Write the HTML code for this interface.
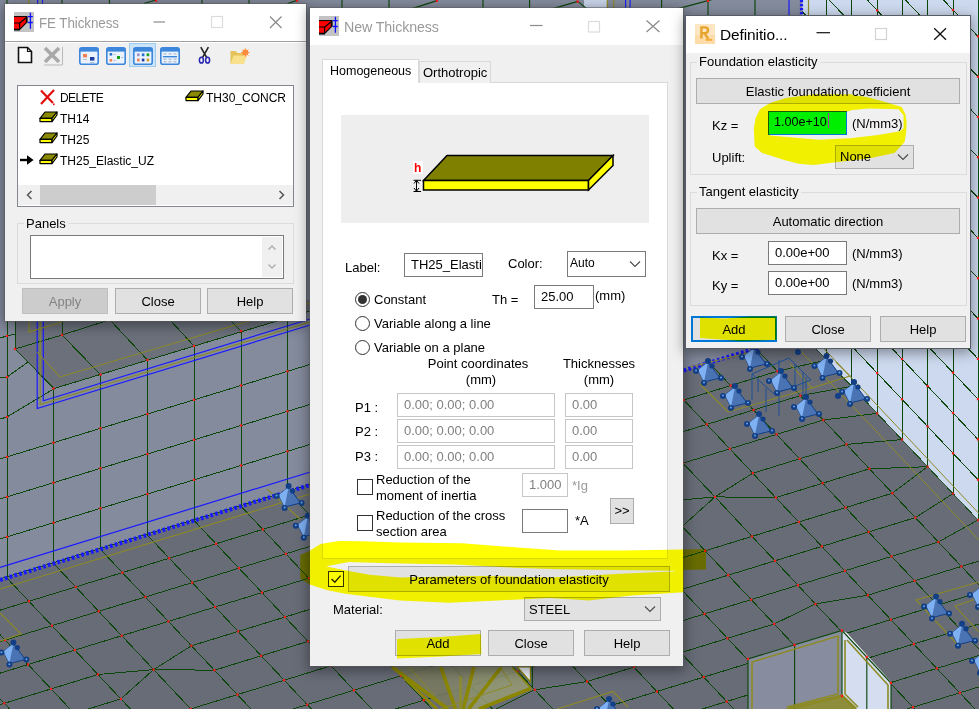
<!DOCTYPE html>
<html>
<head>
<meta charset="utf-8">
<title>New Thickness</title>
<style>
html,body{margin:0;padding:0;}
body{width:979px;height:709px;overflow:hidden;position:relative;background:#6a6e78;font-family:"Liberation Sans",sans-serif;font-size:13px;color:#000;}
.abs{position:absolute;}
#bg{position:absolute;left:0;top:0;width:979px;height:709px;}
.dlg{position:absolute;background:#f0f0f0;box-shadow:0 0 0 1px rgba(90,90,90,.55),0 3px 12px 2px rgba(0,0,0,.38);}
.tbar{position:absolute;left:0;top:0;right:0;background:#fff;}
.ttl{position:absolute;font-size:15px;color:#9a9a9a;white-space:nowrap;letter-spacing:-0.1px;}
.t{position:absolute;white-space:nowrap;line-height:16px;font-size:13px;}
.btn{position:absolute;box-sizing:border-box;background:#e1e1e1;border:1px solid #adadad;text-align:center;font-size:13px;line-height:22px;white-space:nowrap;}
.inp{position:absolute;box-sizing:border-box;background:#fff;border:1px solid #7a7a7a;font-size:13px;line-height:22px;white-space:nowrap;overflow:hidden;padding-left:5px;}
.inp.dis{border-color:#c6c6c6;color:#808080;}
.cmb{position:absolute;box-sizing:border-box;background:#fff;border:1px solid #7a7a7a;font-size:13px;line-height:22px;white-space:nowrap;overflow:hidden;padding-left:4px;}
.grp{position:absolute;box-sizing:border-box;border:1px solid #dcdcdc;}
.glab{position:absolute;background:#f0f0f0;padding:0 2px;white-space:nowrap;line-height:16px;font-size:13px;}
.radio{position:absolute;box-sizing:border-box;width:15px;height:15px;border:1px solid #333;border-radius:50%;background:#fff;}
.radio.on:after{content:"";position:absolute;left:2px;top:2px;width:9px;height:9px;border-radius:50%;background:#333;}
.chk{position:absolute;box-sizing:border-box;width:15px;height:15px;border:1px solid #333;background:#fff;}
svg{position:absolute;overflow:visible;}
</style>
</head>
<body>
<!-- BACKGROUND -->
<svg id="bg" width="979" height="709" viewBox="0 0 979 709">
<!--BGSTART-->
<rect x="0" y="0" width="979" height="709" fill="#686c77"/>
<polygon points="0,0 802.3,0 802.3,334.1 0,580" fill="#848b9d"/>
<polygon points="802.3,0 979,0 979,521.1 802.3,334.1" fill="#cdd9ee"/>
<polygon points="15,300 15,349 54,388.5 310,311 310,300" fill="#6b707b"/>
<defs><clipPath id="cf"><polygon points="0,580 802.3,334.1 979,521.1 979,709 0,709"/></clipPath>
<clipPath id="cw"><polygon points="0,0 802.3,0 802.3,334.1 0,580"/></clipPath>
<clipPath id="cl"><polygon points="802.3,0 979,0 979,521.1 802.3,334.1"/></clipPath></defs>
<g clip-path="url(#cf)" stroke="#0c470c" stroke-width="1" fill="none" shape-rendering="crispEdges">
<path d="M-60.8,314.2L-37.8,338.6M-14.0,299.8L9.0,324.2M32.8,285.4L55.8,309.8M-84.6,353.0L-37.8,338.6M-37.8,338.6L9.0,324.2M-37.8,338.6L-14.8,363.0M9.0,324.2L55.8,309.8M9.0,324.2L32.0,348.6M55.8,309.8L102.6,295.4M55.8,309.8L78.8,334.2M102.6,295.4L125.6,319.8M149.3,281.1L172.3,305.5M-61.6,377.4L-14.8,363.0M-61.6,377.4L-38.6,401.8M-14.8,363.0L32.0,348.6M-14.8,363.0L8.2,387.4M32.0,348.6L78.8,334.2M32.0,348.6L55.0,373.0M78.8,334.2L125.6,319.8M78.8,334.2L101.8,358.6M125.6,319.8L172.3,305.5M125.6,319.8L148.6,344.2M172.3,305.5L219.1,291.1M172.3,305.5L195.3,329.9M219.1,291.1L242.1,315.5M265.9,276.7L288.9,301.1M-85.3,416.1L-38.6,401.8M-38.6,401.8L8.2,387.4M-38.6,401.8L-15.6,426.2M8.2,387.4L55.0,373.0M8.2,387.4L31.2,411.8M55.0,373.0L101.8,358.6M55.0,373.0L78.0,397.4M101.8,358.6L148.6,344.2M101.8,358.6L124.8,383.0M148.6,344.2L195.3,329.9M148.6,344.2L171.6,368.6M195.3,329.9L242.1,315.5M195.3,329.9L218.3,354.3M242.1,315.5L288.9,301.1M242.1,315.5L265.1,339.9M288.9,301.1L335.7,286.7M288.9,301.1L311.9,325.5M335.7,286.7L358.7,311.1M-62.3,440.5L-15.6,426.2M-62.3,440.5L-39.3,464.9M-15.6,426.2L31.2,411.8M-15.6,426.2L7.4,450.6M31.2,411.8L78.0,397.4M31.2,411.8L54.2,436.2M78.0,397.4L124.8,383.0M78.0,397.4L101.0,421.8M124.8,383.0L171.6,368.6M124.8,383.0L147.8,407.4M171.6,368.6L218.3,354.3M171.6,368.6L194.6,393.0M218.3,354.3L265.1,339.9M218.3,354.3L241.3,378.7M265.1,339.9L311.9,325.5M265.1,339.9L288.1,364.3M311.9,325.5L358.7,311.1M311.9,325.5L334.9,349.9M358.7,311.1L405.5,296.7M358.7,311.1L381.7,335.5M405.5,296.7L428.5,321.1M452.2,282.4L475.2,306.8M-86.1,479.3L-39.3,464.9M-39.3,464.9L7.4,450.6M-39.3,464.9L-16.3,489.3M7.4,450.6L54.2,436.2M7.4,450.6L30.4,475.0M54.2,436.2L101.0,421.8M54.2,436.2L77.2,460.6M101.0,421.8L147.8,407.4M101.0,421.8L124.0,446.2M147.8,407.4L194.6,393.0M147.8,407.4L170.8,431.8M194.6,393.0L241.3,378.7M194.6,393.0L217.6,417.4M241.3,378.7L288.1,364.3M241.3,378.7L264.3,403.1M288.1,364.3L334.9,349.9M288.1,364.3L311.1,388.7M334.9,349.9L381.7,335.5M334.9,349.9L357.9,374.3M381.7,335.5L428.5,321.1M381.7,335.5L404.7,359.9M428.5,321.1L475.2,306.8M428.5,321.1L451.5,345.5M475.2,306.8L522.0,292.4M475.2,306.8L498.2,331.2M522.0,292.4L545.0,316.8M568.8,278.0L591.8,302.4M-63.1,503.7L-16.3,489.3M-63.1,503.7L-40.1,528.1M-16.3,489.3L30.4,475.0M-16.3,489.3L6.7,513.7M30.4,475.0L77.2,460.6M30.4,475.0L53.4,499.4M77.2,460.6L124.0,446.2M77.2,460.6L100.2,485.0M124.0,446.2L170.8,431.8M124.0,446.2L147.0,470.6M170.8,431.8L217.6,417.4M170.8,431.8L193.8,456.2M217.6,417.4L264.3,403.1M217.6,417.4L240.6,441.8M264.3,403.1L311.1,388.7M264.3,403.1L287.3,427.5M311.1,388.7L357.9,374.3M311.1,388.7L334.1,413.1M357.9,374.3L404.7,359.9M357.9,374.3L380.9,398.7M404.7,359.9L451.5,345.5M404.7,359.9L427.7,384.3M451.5,345.5L498.2,331.2M451.5,345.5L474.5,369.9M498.2,331.2L545.0,316.8M498.2,331.2L521.2,355.6M545.0,316.8L591.8,302.4M545.0,316.8L568.0,341.2M591.8,302.4L638.6,288.0M591.8,302.4L614.8,326.8M638.6,288.0L661.6,312.4M-86.9,542.5L-40.1,528.1M-40.1,528.1L6.7,513.7M-40.1,528.1L-17.1,552.5M6.7,513.7L53.4,499.4M6.7,513.7L29.7,538.1M53.4,499.4L100.2,485.0M53.4,499.4L76.4,523.8M100.2,485.0L147.0,470.6M100.2,485.0L123.2,509.4M147.0,470.6L193.8,456.2M147.0,470.6L170.0,495.0M193.8,456.2L240.6,441.8M193.8,456.2L216.8,480.6M240.6,441.8L287.3,427.5M240.6,441.8L263.6,466.2M287.3,427.5L334.1,413.1M287.3,427.5L310.3,451.9M334.1,413.1L380.9,398.7M334.1,413.1L357.1,437.5M380.9,398.7L427.7,384.3M380.9,398.7L403.9,423.1M427.7,384.3L474.5,369.9M427.7,384.3L450.7,408.7M474.5,369.9L521.2,355.6M474.5,369.9L497.5,394.3M521.2,355.6L568.0,341.2M521.2,355.6L544.2,380.0M568.0,341.2L614.8,326.8M568.0,341.2L591.0,365.6M614.8,326.8L661.6,312.4M614.8,326.8L637.8,351.2M661.6,312.4L708.4,298.0M661.6,312.4L684.6,336.8M708.4,298.0L731.4,322.4M755.1,283.7L778.1,308.1M-63.9,566.9L-17.1,552.5M-63.9,566.9L-40.9,591.3M-17.1,552.5L29.7,538.1M-17.1,552.5L5.9,576.9M29.7,538.1L76.4,523.8M29.7,538.1L52.7,562.5M76.4,523.8L123.2,509.4M76.4,523.8L99.4,548.2M123.2,509.4L170.0,495.0M123.2,509.4L146.2,533.8M170.0,495.0L216.8,480.6M170.0,495.0L193.0,519.4M216.8,480.6L263.6,466.2M216.8,480.6L239.8,505.0M263.6,466.2L310.3,451.9M263.6,466.2L286.6,490.6M310.3,451.9L357.1,437.5M310.3,451.9L333.3,476.3M357.1,437.5L403.9,423.1M357.1,437.5L380.1,461.9M403.9,423.1L450.7,408.7M403.9,423.1L426.9,447.5M450.7,408.7L497.5,394.3M450.7,408.7L473.7,433.1M497.5,394.3L544.2,380.0M497.5,394.3L520.5,418.7M544.2,380.0L591.0,365.6M544.2,380.0L567.2,404.4M591.0,365.6L637.8,351.2M591.0,365.6L614.0,390.0M637.8,351.2L684.6,336.8M637.8,351.2L660.8,375.6M684.6,336.8L731.4,322.4M684.6,336.8L707.6,361.2M731.4,322.4L778.1,308.1M731.4,322.4L754.4,346.8M778.1,308.1L824.9,293.7M778.1,308.1L801.1,332.5M824.9,293.7L847.9,318.1M871.7,279.3L894.7,303.7M-87.7,605.7L-40.9,591.3M-40.9,591.3L5.9,576.9M-40.9,591.3L-17.9,615.7M5.9,576.9L52.7,562.5M5.9,576.9L28.9,601.3M52.7,562.5L99.4,548.2M52.7,562.5L75.7,586.9M99.4,548.2L146.2,533.8M99.4,548.2L122.4,572.6M146.2,533.8L193.0,519.4M146.2,533.8L169.2,558.2M193.0,519.4L239.8,505.0M193.0,519.4L216.0,543.8M239.8,505.0L286.6,490.6M239.8,505.0L262.8,529.4M286.6,490.6L333.3,476.3M286.6,490.6L309.6,515.0M333.3,476.3L380.1,461.9M333.3,476.3L356.3,500.7M380.1,461.9L426.9,447.5M380.1,461.9L403.1,486.3M426.9,447.5L473.7,433.1M426.9,447.5L449.9,471.9M473.7,433.1L520.5,418.7M473.7,433.1L496.7,457.5M520.5,418.7L567.2,404.4M520.5,418.7L543.5,443.1M567.2,404.4L614.0,390.0M567.2,404.4L590.2,428.8M614.0,390.0L660.8,375.6M614.0,390.0L637.0,414.4M660.8,375.6L707.6,361.2M660.8,375.6L683.8,400.0M707.6,361.2L754.4,346.8M707.6,361.2L730.6,385.6M754.4,346.8L801.1,332.5M754.4,346.8L777.4,371.2M801.1,332.5L847.9,318.1M801.1,332.5L826.5,360.0M847.9,318.1L894.7,303.7M847.9,318.1L870.9,342.5M894.7,303.7L941.5,289.3M894.7,303.7L917.7,328.1M941.5,289.3L964.5,313.7M-64.7,630.1L-17.9,615.7M-64.7,630.1L-41.7,654.5M-17.9,615.7L28.9,601.3M-17.9,615.7L5.1,640.1M28.9,601.3L75.7,586.9M28.9,601.3L51.9,625.7M75.7,586.9L122.4,572.6M75.7,586.9L98.7,611.3M122.4,572.6L169.2,558.2M122.4,572.6L145.4,597.0M169.2,558.2L216.0,543.8M169.2,558.2L192.2,582.6M216.0,543.8L262.8,529.4M216.0,543.8L239.0,568.2M262.8,529.4L309.6,515.0M262.8,529.4L285.8,553.8M309.6,515.0L356.3,500.7M309.6,515.0L332.6,539.4M356.3,500.7L403.1,486.3M356.3,500.7L379.3,525.1M403.1,486.3L449.9,471.9M403.1,486.3L426.1,510.7M449.9,471.9L496.7,457.5M449.9,471.9L472.9,496.3M496.7,457.5L543.5,443.1M496.7,457.5L519.7,481.9M543.5,443.1L590.2,428.8M543.5,443.1L566.5,467.5M590.2,428.8L637.0,414.4M590.2,428.8L613.2,453.2M637.0,414.4L683.8,400.0M637.0,414.4L660.0,438.8M683.8,400.0L730.6,385.6M683.8,400.0L706.8,424.4M730.6,385.6L777.4,371.2M730.6,385.6L753.6,410.0M777.4,371.2L826.5,360.0M777.4,371.2L800.4,395.6M826.5,360.0L870.9,342.5M826.5,360.0L851.5,386.3M870.9,342.5L917.7,328.1M870.9,342.5L893.9,366.9M917.7,328.1L964.5,313.7M917.7,328.1L940.7,352.5M964.5,313.7L1011.3,299.3M964.5,313.7L987.5,338.1M1011.3,299.3L1034.3,323.7M-88.5,668.9L-41.7,654.5M-41.7,654.5L5.1,640.1M-41.7,654.5L-18.7,678.9M5.1,640.1L51.9,625.7M5.1,640.1L28.1,664.5M51.9,625.7L98.7,611.3M51.9,625.7L74.9,650.1M98.7,611.3L145.4,597.0M98.7,611.3L121.7,635.7M145.4,597.0L192.2,582.6M145.4,597.0L168.4,621.4M192.2,582.6L239.0,568.2M192.2,582.6L215.2,607.0M239.0,568.2L285.8,553.8M239.0,568.2L262.0,592.6M285.8,553.8L332.6,539.4M285.8,553.8L308.8,578.2M332.6,539.4L379.3,525.1M332.6,539.4L355.6,563.8M379.3,525.1L426.1,510.7M379.3,525.1L402.3,549.5M426.1,510.7L472.9,496.3M426.1,510.7L449.1,535.1M472.9,496.3L519.7,481.9M472.9,496.3L495.9,520.7M519.7,481.9L566.5,467.5M519.7,481.9L542.7,506.3M566.5,467.5L613.2,453.2M566.5,467.5L589.5,491.9M613.2,453.2L660.0,438.8M613.2,453.2L636.2,477.6M660.0,438.8L706.8,424.4M660.0,438.8L683.0,463.2M706.8,424.4L753.6,410.0M706.8,424.4L729.8,448.8M753.6,410.0L800.4,395.6M753.6,410.0L776.6,434.4M800.4,395.6L851.5,386.3M800.4,395.6L823.4,420.0M851.5,386.3L893.9,366.9M851.5,386.3L877.2,413.4M893.9,366.9L940.7,352.5M893.9,366.9L916.9,391.3M940.7,352.5L987.5,338.1M940.7,352.5L963.7,376.9M987.5,338.1L1034.3,323.7M987.5,338.1L1010.5,362.5M1034.3,323.7L1081.0,309.4M1034.3,323.7L1057.3,348.1M-65.5,693.3L-18.7,678.9M-65.5,693.3L-42.5,717.7M-18.7,678.9L28.1,664.5M-18.7,678.9L4.3,703.3M28.1,664.5L74.9,650.1M28.1,664.5L51.1,688.9M74.9,650.1L121.7,635.7M74.9,650.1L97.9,674.5M121.7,635.7L168.4,621.4M121.7,635.7L153.6,669.6M168.4,621.4L215.2,607.0M168.4,621.4L191.4,645.8M215.2,607.0L262.0,592.6M215.2,607.0L238.2,631.4M262.0,592.6L308.8,578.2M262.0,592.6L285.0,617.0M308.8,578.2L355.6,563.8M308.8,578.2L331.8,602.6M355.6,563.8L402.3,549.5M355.6,563.8L378.6,588.2M402.3,549.5L449.1,535.1M402.3,549.5L425.3,573.9M449.1,535.1L495.9,520.7M449.1,535.1L472.1,559.5M495.9,520.7L542.7,506.3M495.9,520.7L518.9,545.1M542.7,506.3L589.5,491.9M542.7,506.3L565.7,530.7M589.5,491.9L636.2,477.6M589.5,491.9L612.5,516.3M636.2,477.6L683.0,463.2M636.2,477.6L659.2,502.0M683.0,463.2L729.8,448.8M683.0,463.2L715.0,496.9M729.8,448.8L776.6,434.4M729.8,448.8L752.8,473.2M776.6,434.4L823.4,420.0M776.6,434.4L799.6,458.8M823.4,420.0L877.2,413.4M823.4,420.0L846.4,444.4M877.2,413.4L916.9,391.3M877.2,413.4L902.0,439.6M916.9,391.3L963.7,376.9M916.9,391.3L939.9,415.7M963.7,376.9L1010.5,362.5M963.7,376.9L986.7,401.3M1010.5,362.5L1057.3,348.1M1010.5,362.5L1033.5,386.9M-89.2,732.0L-42.5,717.7M-42.5,717.7L4.3,703.3M-42.5,717.7L-19.5,742.1M4.3,703.3L51.1,688.9M4.3,703.3L27.3,727.7M51.1,688.9L97.9,674.5M51.1,688.9L74.1,713.3M97.9,674.5L153.6,669.6M97.9,674.5L120.9,698.9M153.6,669.6L191.4,645.8M191.4,645.8L238.2,631.4M191.4,645.8L214.4,670.2M238.2,631.4L285.0,617.0M238.2,631.4L261.2,655.8M285.0,617.0L331.8,602.6M285.0,617.0L308.0,641.4M331.8,602.6L378.6,588.2M331.8,602.6L354.8,627.0M378.6,588.2L425.3,573.9M378.6,588.2L401.6,612.6M425.3,573.9L472.1,559.5M425.3,573.9L448.3,598.3M472.1,559.5L518.9,545.1M472.1,559.5L495.1,583.9M518.9,545.1L565.7,530.7M518.9,545.1L541.9,569.5M565.7,530.7L612.5,516.3M565.7,530.7L588.7,555.1M612.5,516.3L659.2,502.0M612.5,516.3L635.5,540.7M659.2,502.0L715.0,496.9M659.2,502.0L682.2,526.4M715.0,496.9L752.8,473.2M752.8,473.2L799.6,458.8M752.8,473.2L775.8,497.6M799.6,458.8L846.4,444.4M799.6,458.8L822.6,483.2M846.4,444.4L902.0,439.6M846.4,444.4L869.4,468.8M902.0,439.6L939.9,415.7M902.0,439.6L927.6,466.7M939.9,415.7L986.7,401.3M939.9,415.7L962.9,440.1M986.7,401.3L1033.5,386.9M986.7,401.3L1009.7,425.7M1033.5,386.9L1080.3,372.5M1033.5,386.9L1056.5,411.3M-66.2,756.4L-19.5,742.1M-19.5,742.1L27.3,727.7M-19.5,742.1L3.5,766.5M27.3,727.7L74.1,713.3M27.3,727.7L50.3,752.1M74.1,713.3L120.9,698.9M74.1,713.3L97.1,737.7M120.9,698.9L153.6,669.6M120.9,698.9L143.9,723.3M153.6,669.6L214.4,670.2M153.6,669.6L190.7,708.9M214.4,670.2L261.2,655.8M214.4,670.2L237.4,694.6M261.2,655.8L308.0,641.4M261.2,655.8L284.2,680.2M308.0,641.4L354.8,627.0M308.0,641.4L331.0,665.8M354.8,627.0L401.6,612.6M354.8,627.0L377.8,651.4M401.6,612.6L448.3,598.3M401.6,612.6L424.6,637.0M448.3,598.3L495.1,583.9M448.3,598.3L471.3,622.7M495.1,583.9L541.9,569.5M495.1,583.9L518.1,608.3M541.9,569.5L588.7,555.1M541.9,569.5L564.9,593.9M588.7,555.1L635.5,540.7M588.7,555.1L611.7,579.5M635.5,540.7L682.2,526.4M635.5,540.7L658.5,565.1M682.2,526.4L715.0,496.9M682.2,526.4L705.2,550.8M715.0,496.9L775.8,497.6M715.0,496.9L752.0,536.4M775.8,497.6L822.6,483.2M775.8,497.6L798.8,522.0M822.6,483.2L869.4,468.8M822.6,483.2L845.6,507.6M869.4,468.8L927.6,466.7M869.4,468.8L892.4,493.2M927.6,466.7L962.9,440.1M962.9,440.1L1009.7,425.7M962.9,440.1L985.9,464.5M1009.7,425.7L1056.5,411.3M1009.7,425.7L1032.7,450.1M-43.2,780.8L3.5,766.5M3.5,766.5L50.3,752.1M3.5,766.5L26.5,790.9M50.3,752.1L97.1,737.7M50.3,752.1L73.3,776.5M97.1,737.7L143.9,723.3M97.1,737.7L120.1,762.1M143.9,723.3L190.7,708.9M143.9,723.3L166.9,747.7M190.7,708.9L237.4,694.6M190.7,708.9L213.7,733.3M237.4,694.6L284.2,680.2M237.4,694.6L260.4,719.0M284.2,680.2L331.0,665.8M284.2,680.2L307.2,704.6M331.0,665.8L377.8,651.4M331.0,665.8L354.0,690.2M377.8,651.4L424.6,637.0M377.8,651.4L400.8,675.8M424.6,637.0L471.3,622.7M424.6,637.0L447.6,661.4M471.3,622.7L518.1,608.3M471.3,622.7L494.3,647.1M518.1,608.3L564.9,593.9M518.1,608.3L541.1,632.7M564.9,593.9L611.7,579.5M564.9,593.9L587.9,618.3M611.7,579.5L658.5,565.1M611.7,579.5L634.7,603.9M658.5,565.1L705.2,550.8M658.5,565.1L681.5,589.5M705.2,550.8L752.0,536.4M705.2,550.8L728.2,575.2M752.0,536.4L798.8,522.0M752.0,536.4L775.0,560.8M798.8,522.0L845.6,507.6M798.8,522.0L821.8,546.4M845.6,507.6L892.4,493.2M845.6,507.6L868.6,532.0M892.4,493.2L927.6,466.7M892.4,493.2L915.4,517.6M927.6,466.7L985.9,464.5M927.6,466.7L953.0,493.6M985.9,464.5L1032.7,450.1M985.9,464.5L1008.9,488.9M1032.7,450.1L1079.5,435.7M1032.7,450.1L1055.7,474.5M73.3,776.5L120.1,762.1M120.1,762.1L166.9,747.7M120.1,762.1L143.1,786.5M166.9,747.7L213.7,733.3M166.9,747.7L189.9,772.1M213.7,733.3L260.4,719.0M213.7,733.3L236.7,757.7M260.4,719.0L307.2,704.6M260.4,719.0L283.4,743.4M307.2,704.6L354.0,690.2M307.2,704.6L330.2,729.0M354.0,690.2L400.8,675.8M354.0,690.2L377.0,714.6M400.8,675.8L447.6,661.4M400.8,675.8L423.8,700.2M447.6,661.4L494.3,647.1M447.6,661.4L470.6,685.8M494.3,647.1L541.1,632.7M494.3,647.1L517.3,671.5M541.1,632.7L587.9,618.3M541.1,632.7L564.1,657.1M587.9,618.3L634.7,603.9M587.9,618.3L610.9,642.7M634.7,603.9L681.5,589.5M634.7,603.9L657.7,628.3M681.5,589.5L728.2,575.2M681.5,589.5L704.5,613.9M728.2,575.2L775.0,560.8M728.2,575.2L751.2,599.6M775.0,560.8L821.8,546.4M775.0,560.8L798.0,585.2M821.8,546.4L868.6,532.0M821.8,546.4L844.8,570.8M868.6,532.0L915.4,517.6M868.6,532.0L891.6,556.4M915.4,517.6L953.0,493.6M915.4,517.6L938.4,542.0M953.0,493.6L1008.9,488.9M953.0,493.6L978.0,520.0M1008.9,488.9L1055.7,474.5M1008.9,488.9L1031.9,513.3M189.9,772.1L236.7,757.7M236.7,757.7L283.4,743.4M236.7,757.7L259.7,782.1M283.4,743.4L330.2,729.0M283.4,743.4L306.4,767.8M330.2,729.0L377.0,714.6M330.2,729.0L353.2,753.4M377.0,714.6L423.8,700.2M377.0,714.6L400.0,739.0M423.8,700.2L470.6,685.8M423.8,700.2L446.8,724.6M470.6,685.8L517.3,671.5M470.6,685.8L493.6,710.2M517.3,671.5L564.1,657.1M517.3,671.5L534.8,689.8M564.1,657.1L610.9,642.7M564.1,657.1L587.1,681.5M610.9,642.7L657.7,628.3M610.9,642.7L633.9,667.1M657.7,628.3L704.5,613.9M657.7,628.3L680.7,652.7M704.5,613.9L751.2,599.6M704.5,613.9L727.5,638.3M751.2,599.6L798.0,585.2M751.2,599.6L774.2,624.0M798.0,585.2L844.8,570.8M798.0,585.2L815.4,604.0M844.8,570.8L891.6,556.4M844.8,570.8L867.8,595.2M891.6,556.4L938.4,542.0M891.6,556.4L914.6,580.8M938.4,542.0L978.0,520.0M938.4,542.0L961.4,566.4M978.0,520.0L1031.9,513.3M978.0,520.0L1008.1,552.1M1031.9,513.3L1078.7,498.9M1031.9,513.3L1054.9,537.7M259.7,782.1L306.4,767.8M306.4,767.8L353.2,753.4M306.4,767.8L329.4,792.2M353.2,753.4L400.0,739.0M353.2,753.4L376.2,777.8M400.0,739.0L446.8,724.6M400.0,739.0L423.0,763.4M446.8,724.6L493.6,710.2M446.8,724.6L469.8,749.0M493.6,710.2L534.8,689.8M493.6,710.2L516.6,734.6M534.8,689.8L587.1,681.5M534.8,689.8L563.3,720.3M587.1,681.5L633.9,667.1M587.1,681.5L610.1,705.9M633.9,667.1L680.7,652.7M633.9,667.1L656.9,691.5M680.7,652.7L727.5,638.3M680.7,652.7L703.7,677.1M727.5,638.3L774.2,624.0M727.5,638.3L750.5,662.7M774.2,624.0L815.4,604.0M774.2,624.0L797.2,648.4M815.4,604.0L867.8,595.2M815.4,604.0L844.0,634.0M867.8,595.2L914.6,580.8M867.8,595.2L890.8,619.6M914.6,580.8L961.4,566.4M914.6,580.8L937.6,605.2M961.4,566.4L1008.1,552.1M961.4,566.4L984.4,590.8M1008.1,552.1L1054.9,537.7M1008.1,552.1L1031.1,576.5M376.2,777.8L423.0,763.4M423.0,763.4L469.8,749.0M423.0,763.4L446.0,787.8M469.8,749.0L516.6,734.6M469.8,749.0L492.8,773.4M516.6,734.6L563.3,720.3M516.6,734.6L539.6,759.0M563.3,720.3L610.1,705.9M563.3,720.3L586.3,744.7M610.1,705.9L656.9,691.5M610.1,705.9L633.1,730.3M656.9,691.5L703.7,677.1M656.9,691.5L679.9,715.9M703.7,677.1L750.5,662.7M703.7,677.1L726.7,701.5M750.5,662.7L797.2,648.4M750.5,662.7L773.5,687.1M797.2,648.4L844.0,634.0M797.2,648.4L820.2,672.8M844.0,634.0L890.8,619.6M844.0,634.0L867.0,658.4M890.8,619.6L937.6,605.2M890.8,619.6L913.8,644.0M937.6,605.2L984.4,590.8M937.6,605.2L960.6,629.6M984.4,590.8L1031.1,576.5M984.4,590.8L1007.4,615.2M1031.1,576.5L1077.9,562.1M1031.1,576.5L1054.1,600.9M492.8,773.4L539.6,759.0M539.6,759.0L586.3,744.7M539.6,759.0L562.6,783.4M586.3,744.7L633.1,730.3M586.3,744.7L609.3,769.1M633.1,730.3L679.9,715.9M633.1,730.3L656.1,754.7M679.9,715.9L726.7,701.5M679.9,715.9L702.9,740.3M726.7,701.5L773.5,687.1M726.7,701.5L749.7,725.9M773.5,687.1L820.2,672.8M773.5,687.1L796.5,711.5M820.2,672.8L867.0,658.4M820.2,672.8L843.2,697.2M867.0,658.4L913.8,644.0M867.0,658.4L890.0,682.8M913.8,644.0L960.6,629.6M913.8,644.0L936.8,668.4M960.6,629.6L1007.4,615.2M960.6,629.6L983.6,654.0M1007.4,615.2L1054.1,600.9M1007.4,615.2L1030.4,639.6M562.6,783.4L609.3,769.1M609.3,769.1L656.1,754.7M609.3,769.1L632.3,793.5M656.1,754.7L702.9,740.3M656.1,754.7L679.1,779.1M702.9,740.3L749.7,725.9M702.9,740.3L725.9,764.7M749.7,725.9L796.5,711.5M749.7,725.9L772.7,750.3M796.5,711.5L843.2,697.2M796.5,711.5L819.5,735.9M843.2,697.2L890.0,682.8M843.2,697.2L866.2,721.6M890.0,682.8L936.8,668.4M890.0,682.8L913.0,707.2M936.8,668.4L983.6,654.0M936.8,668.4L959.8,692.8M983.6,654.0L1030.4,639.6M983.6,654.0L1006.6,678.4M1030.4,639.6L1077.1,625.3M1030.4,639.6L1053.4,664.0M679.1,779.1L725.9,764.7M725.9,764.7L772.7,750.3M725.9,764.7L748.9,789.1M772.7,750.3L819.5,735.9M772.7,750.3L795.7,774.7M819.5,735.9L866.2,721.6M819.5,735.9L842.5,760.3M866.2,721.6L913.0,707.2M866.2,721.6L889.2,746.0M913.0,707.2L959.8,692.8M913.0,707.2L936.0,731.6M959.8,692.8L1006.6,678.4M959.8,692.8L982.8,717.2M1006.6,678.4L1053.4,664.0M1006.6,678.4L1029.6,702.8M795.7,774.7L842.5,760.3M842.5,760.3L889.2,746.0M842.5,760.3L865.5,784.7M889.2,746.0L936.0,731.6M889.2,746.0L912.2,770.4M936.0,731.6L982.8,717.2M936.0,731.6L959.0,756.0M982.8,717.2L1029.6,702.8M982.8,717.2L1005.8,741.6M1029.6,702.8L1076.4,688.4M1029.6,702.8L1052.6,727.2M912.2,770.4L959.0,756.0M959.0,756.0L1005.8,741.6M959.0,756.0L982.0,780.4M1005.8,741.6L1052.6,727.2M1005.8,741.6L1028.8,766.0M982.0,780.4L1028.8,766.0M1028.8,766.0L1075.6,751.6M1028.8,766.0L1051.8,790.4"/>
</g>
<g clip-path="url(#cf)" fill="#ff1a1a">
<rect x="30.9" y="347.5" width="2.2" height="2.2"/>
<rect x="77.7" y="333.1" width="2.2" height="2.2"/>
<rect x="7.1" y="386.3" width="2.2" height="2.2"/>
<rect x="53.9" y="371.9" width="2.2" height="2.2"/>
<rect x="100.7" y="357.5" width="2.2" height="2.2"/>
<rect x="147.5" y="343.1" width="2.2" height="2.2"/>
<rect x="30.1" y="410.7" width="2.2" height="2.2"/>
<rect x="76.9" y="396.3" width="2.2" height="2.2"/>
<rect x="123.7" y="381.9" width="2.2" height="2.2"/>
<rect x="170.5" y="367.5" width="2.2" height="2.2"/>
<rect x="217.2" y="353.2" width="2.2" height="2.2"/>
<rect x="264.0" y="338.8" width="2.2" height="2.2"/>
<rect x="6.3" y="449.5" width="2.2" height="2.2"/>
<rect x="53.1" y="435.1" width="2.2" height="2.2"/>
<rect x="99.9" y="420.7" width="2.2" height="2.2"/>
<rect x="146.7" y="406.3" width="2.2" height="2.2"/>
<rect x="193.5" y="391.9" width="2.2" height="2.2"/>
<rect x="240.2" y="377.6" width="2.2" height="2.2"/>
<rect x="287.0" y="363.2" width="2.2" height="2.2"/>
<rect x="29.3" y="473.9" width="2.2" height="2.2"/>
<rect x="76.1" y="459.5" width="2.2" height="2.2"/>
<rect x="122.9" y="445.1" width="2.2" height="2.2"/>
<rect x="169.7" y="430.7" width="2.2" height="2.2"/>
<rect x="216.5" y="416.3" width="2.2" height="2.2"/>
<rect x="263.2" y="402.0" width="2.2" height="2.2"/>
<rect x="310.0" y="387.6" width="2.2" height="2.2"/>
<rect x="5.6" y="512.6" width="2.2" height="2.2"/>
<rect x="52.3" y="498.3" width="2.2" height="2.2"/>
<rect x="99.1" y="483.9" width="2.2" height="2.2"/>
<rect x="145.9" y="469.5" width="2.2" height="2.2"/>
<rect x="192.7" y="455.1" width="2.2" height="2.2"/>
<rect x="239.5" y="440.7" width="2.2" height="2.2"/>
<rect x="286.2" y="426.4" width="2.2" height="2.2"/>
<rect x="28.6" y="537.0" width="2.2" height="2.2"/>
<rect x="75.3" y="522.7" width="2.2" height="2.2"/>
<rect x="122.1" y="508.3" width="2.2" height="2.2"/>
<rect x="168.9" y="493.9" width="2.2" height="2.2"/>
<rect x="215.7" y="479.5" width="2.2" height="2.2"/>
<rect x="262.5" y="465.1" width="2.2" height="2.2"/>
<rect x="309.2" y="450.8" width="2.2" height="2.2"/>
<rect x="683.5" y="335.7" width="2.2" height="2.2"/>
<rect x="4.8" y="575.8" width="2.2" height="2.2"/>
<rect x="51.6" y="561.4" width="2.2" height="2.2"/>
<rect x="98.3" y="547.1" width="2.2" height="2.2"/>
<rect x="145.1" y="532.7" width="2.2" height="2.2"/>
<rect x="191.9" y="518.3" width="2.2" height="2.2"/>
<rect x="238.7" y="503.9" width="2.2" height="2.2"/>
<rect x="285.5" y="489.5" width="2.2" height="2.2"/>
<rect x="706.5" y="360.1" width="2.2" height="2.2"/>
<rect x="753.3" y="345.7" width="2.2" height="2.2"/>
<rect x="27.8" y="600.2" width="2.2" height="2.2"/>
<rect x="74.6" y="585.8" width="2.2" height="2.2"/>
<rect x="121.3" y="571.5" width="2.2" height="2.2"/>
<rect x="168.1" y="557.1" width="2.2" height="2.2"/>
<rect x="214.9" y="542.7" width="2.2" height="2.2"/>
<rect x="261.7" y="528.3" width="2.2" height="2.2"/>
<rect x="308.5" y="513.9" width="2.2" height="2.2"/>
<rect x="682.7" y="398.9" width="2.2" height="2.2"/>
<rect x="729.5" y="384.5" width="2.2" height="2.2"/>
<rect x="776.3" y="370.1" width="2.2" height="2.2"/>
<rect x="825.4" y="358.9" width="2.2" height="2.2"/>
<rect x="4.0" y="639.0" width="2.2" height="2.2"/>
<rect x="50.8" y="624.6" width="2.2" height="2.2"/>
<rect x="97.6" y="610.2" width="2.2" height="2.2"/>
<rect x="144.3" y="595.9" width="2.2" height="2.2"/>
<rect x="191.1" y="581.5" width="2.2" height="2.2"/>
<rect x="237.9" y="567.1" width="2.2" height="2.2"/>
<rect x="284.7" y="552.7" width="2.2" height="2.2"/>
<rect x="705.7" y="423.3" width="2.2" height="2.2"/>
<rect x="752.5" y="408.9" width="2.2" height="2.2"/>
<rect x="799.3" y="394.5" width="2.2" height="2.2"/>
<rect x="850.4" y="385.2" width="2.2" height="2.2"/>
<rect x="892.8" y="365.8" width="2.2" height="2.2"/>
<rect x="939.6" y="351.4" width="2.2" height="2.2"/>
<rect x="27.0" y="663.4" width="2.2" height="2.2"/>
<rect x="73.8" y="649.0" width="2.2" height="2.2"/>
<rect x="120.6" y="634.6" width="2.2" height="2.2"/>
<rect x="167.3" y="620.3" width="2.2" height="2.2"/>
<rect x="214.1" y="605.9" width="2.2" height="2.2"/>
<rect x="260.9" y="591.5" width="2.2" height="2.2"/>
<rect x="307.7" y="577.1" width="2.2" height="2.2"/>
<rect x="681.9" y="462.1" width="2.2" height="2.2"/>
<rect x="728.7" y="447.7" width="2.2" height="2.2"/>
<rect x="775.5" y="433.3" width="2.2" height="2.2"/>
<rect x="822.3" y="418.9" width="2.2" height="2.2"/>
<rect x="876.1" y="412.3" width="2.2" height="2.2"/>
<rect x="915.8" y="390.2" width="2.2" height="2.2"/>
<rect x="962.6" y="375.8" width="2.2" height="2.2"/>
<rect x="3.2" y="702.2" width="2.2" height="2.2"/>
<rect x="50.0" y="687.8" width="2.2" height="2.2"/>
<rect x="96.8" y="673.4" width="2.2" height="2.2"/>
<rect x="152.5" y="668.5" width="2.2" height="2.2"/>
<rect x="190.3" y="644.7" width="2.2" height="2.2"/>
<rect x="237.1" y="630.3" width="2.2" height="2.2"/>
<rect x="283.9" y="615.9" width="2.2" height="2.2"/>
<rect x="713.9" y="495.8" width="2.2" height="2.2"/>
<rect x="751.7" y="472.1" width="2.2" height="2.2"/>
<rect x="798.5" y="457.7" width="2.2" height="2.2"/>
<rect x="845.3" y="443.3" width="2.2" height="2.2"/>
<rect x="900.9" y="438.5" width="2.2" height="2.2"/>
<rect x="938.8" y="414.6" width="2.2" height="2.2"/>
<rect x="73.0" y="712.2" width="2.2" height="2.2"/>
<rect x="119.8" y="697.8" width="2.2" height="2.2"/>
<rect x="213.3" y="669.1" width="2.2" height="2.2"/>
<rect x="260.1" y="654.7" width="2.2" height="2.2"/>
<rect x="306.9" y="640.3" width="2.2" height="2.2"/>
<rect x="681.1" y="525.3" width="2.2" height="2.2"/>
<rect x="774.7" y="496.5" width="2.2" height="2.2"/>
<rect x="821.5" y="482.1" width="2.2" height="2.2"/>
<rect x="868.3" y="467.7" width="2.2" height="2.2"/>
<rect x="926.5" y="465.6" width="2.2" height="2.2"/>
<rect x="961.8" y="439.0" width="2.2" height="2.2"/>
<rect x="189.6" y="707.8" width="2.2" height="2.2"/>
<rect x="236.3" y="693.5" width="2.2" height="2.2"/>
<rect x="283.1" y="679.1" width="2.2" height="2.2"/>
<rect x="329.9" y="664.7" width="2.2" height="2.2"/>
<rect x="704.1" y="549.7" width="2.2" height="2.2"/>
<rect x="750.9" y="535.3" width="2.2" height="2.2"/>
<rect x="797.7" y="520.9" width="2.2" height="2.2"/>
<rect x="844.5" y="506.5" width="2.2" height="2.2"/>
<rect x="891.3" y="492.1" width="2.2" height="2.2"/>
<rect x="306.1" y="703.5" width="2.2" height="2.2"/>
<rect x="352.9" y="689.1" width="2.2" height="2.2"/>
<rect x="399.7" y="674.7" width="2.2" height="2.2"/>
<rect x="680.4" y="588.4" width="2.2" height="2.2"/>
<rect x="727.1" y="574.1" width="2.2" height="2.2"/>
<rect x="773.9" y="559.7" width="2.2" height="2.2"/>
<rect x="820.7" y="545.3" width="2.2" height="2.2"/>
<rect x="867.5" y="530.9" width="2.2" height="2.2"/>
<rect x="914.3" y="516.5" width="2.2" height="2.2"/>
<rect x="951.9" y="492.5" width="2.2" height="2.2"/>
<rect x="375.9" y="713.5" width="2.2" height="2.2"/>
<rect x="422.7" y="699.1" width="2.2" height="2.2"/>
<rect x="469.5" y="684.7" width="2.2" height="2.2"/>
<rect x="516.2" y="670.4" width="2.2" height="2.2"/>
<rect x="703.4" y="612.8" width="2.2" height="2.2"/>
<rect x="750.1" y="598.5" width="2.2" height="2.2"/>
<rect x="796.9" y="584.1" width="2.2" height="2.2"/>
<rect x="843.7" y="569.7" width="2.2" height="2.2"/>
<rect x="890.5" y="555.3" width="2.2" height="2.2"/>
<rect x="937.3" y="540.9" width="2.2" height="2.2"/>
<rect x="976.9" y="518.9" width="2.2" height="2.2"/>
<rect x="492.5" y="709.1" width="2.2" height="2.2"/>
<rect x="533.7" y="688.7" width="2.2" height="2.2"/>
<rect x="586.0" y="680.4" width="2.2" height="2.2"/>
<rect x="632.8" y="666.0" width="2.2" height="2.2"/>
<rect x="679.6" y="651.6" width="2.2" height="2.2"/>
<rect x="726.4" y="637.2" width="2.2" height="2.2"/>
<rect x="773.1" y="622.9" width="2.2" height="2.2"/>
<rect x="814.3" y="602.9" width="2.2" height="2.2"/>
<rect x="866.7" y="594.1" width="2.2" height="2.2"/>
<rect x="913.5" y="579.7" width="2.2" height="2.2"/>
<rect x="960.3" y="565.3" width="2.2" height="2.2"/>
<rect x="609.0" y="704.8" width="2.2" height="2.2"/>
<rect x="655.8" y="690.4" width="2.2" height="2.2"/>
<rect x="702.6" y="676.0" width="2.2" height="2.2"/>
<rect x="749.4" y="661.6" width="2.2" height="2.2"/>
<rect x="796.1" y="647.3" width="2.2" height="2.2"/>
<rect x="842.9" y="632.9" width="2.2" height="2.2"/>
<rect x="889.7" y="618.5" width="2.2" height="2.2"/>
<rect x="936.5" y="604.1" width="2.2" height="2.2"/>
<rect x="983.3" y="589.7" width="2.2" height="2.2"/>
<rect x="725.6" y="700.4" width="2.2" height="2.2"/>
<rect x="772.4" y="686.0" width="2.2" height="2.2"/>
<rect x="819.1" y="671.7" width="2.2" height="2.2"/>
<rect x="865.9" y="657.3" width="2.2" height="2.2"/>
<rect x="912.7" y="642.9" width="2.2" height="2.2"/>
<rect x="959.5" y="628.5" width="2.2" height="2.2"/>
<rect x="795.4" y="710.4" width="2.2" height="2.2"/>
<rect x="842.1" y="696.1" width="2.2" height="2.2"/>
<rect x="888.9" y="681.7" width="2.2" height="2.2"/>
<rect x="935.7" y="667.3" width="2.2" height="2.2"/>
<rect x="982.5" y="652.9" width="2.2" height="2.2"/>
<rect x="911.9" y="706.1" width="2.2" height="2.2"/>
<rect x="958.7" y="691.7" width="2.2" height="2.2"/>
</g>
<g clip-path="url(#cw)" stroke="#0c470c" stroke-width="1" fill="none" shape-rendering="crispEdges">
<line x1="7" y1="300" x2="7" y2="577.9"/>
<line x1="53.5" y1="388.5" x2="53.5" y2="563.6"/>
<line x1="100.5" y1="374.6" x2="100.5" y2="549.2"/>
<line x1="147.4" y1="360" x2="147.4" y2="534.8"/>
<line x1="194" y1="346" x2="194" y2="520.5"/>
<line x1="241" y1="331" x2="241" y2="506.1"/>
<line x1="287.5" y1="317" x2="287.5" y2="491.9"/>
<line x1="0" y1="459" x2="320" y2="361.4"/>
<line x1="0" y1="499" x2="320" y2="401.4"/>
<line x1="0" y1="539" x2="320" y2="441.4"/>
<line x1="0" y1="579" x2="320" y2="481.4"/>
<line x1="0" y1="619" x2="320" y2="521.4"/>
<polyline points="0,419 7,417 53.5,389"/>
<polyline points="0,378 7,377 28,362 15,349"/>
<polyline points="0,338 7,336 15,334"/>
<line x1="15" y1="300" x2="15" y2="349"/>
<polyline points="15,349 54,388.5 310,311"/>
<polyline points="15,349 62,335 106,321"/>
<polyline points="62,300 62,335 100.5,374.6"/>
<polyline points="110,320 147.4,360"/>
<polyline points="170,320 194,346"/>
<polyline points="230,320 241,331"/>
</g>
<g clip-path="url(#cw)" fill="#ff1a1a">
<rect x="5.9" y="455.8" width="2.2" height="2.2"/>
<rect x="5.9" y="495.8" width="2.2" height="2.2"/>
<rect x="5.9" y="535.8" width="2.2" height="2.2"/>
<rect x="52.4" y="441.6" width="2.2" height="2.2"/>
<rect x="52.4" y="481.6" width="2.2" height="2.2"/>
<rect x="52.4" y="521.6" width="2.2" height="2.2"/>
<rect x="99.4" y="427.2" width="2.2" height="2.2"/>
<rect x="99.4" y="467.2" width="2.2" height="2.2"/>
<rect x="99.4" y="507.2" width="2.2" height="2.2"/>
<rect x="146.3" y="412.9" width="2.2" height="2.2"/>
<rect x="146.3" y="452.9" width="2.2" height="2.2"/>
<rect x="146.3" y="492.9" width="2.2" height="2.2"/>
<rect x="192.9" y="398.7" width="2.2" height="2.2"/>
<rect x="192.9" y="438.7" width="2.2" height="2.2"/>
<rect x="192.9" y="478.7" width="2.2" height="2.2"/>
<rect x="239.9" y="384.4" width="2.2" height="2.2"/>
<rect x="239.9" y="424.4" width="2.2" height="2.2"/>
<rect x="239.9" y="464.4" width="2.2" height="2.2"/>
<rect x="286.4" y="370.2" width="2.2" height="2.2"/>
<rect x="286.4" y="410.2" width="2.2" height="2.2"/>
<rect x="286.4" y="450.2" width="2.2" height="2.2"/>
<rect x="5.9" y="415.9" width="2.2" height="2.2"/>
<rect x="5.9" y="375.9" width="2.2" height="2.2"/>
<rect x="5.9" y="334.9" width="2.2" height="2.2"/>
<rect x="13.9" y="347.9" width="2.2" height="2.2"/>
<rect x="52.4" y="387.4" width="2.2" height="2.2"/>
<rect x="99.4" y="373.5" width="2.2" height="2.2"/>
<rect x="146.3" y="358.9" width="2.2" height="2.2"/>
<rect x="192.9" y="344.9" width="2.2" height="2.2"/>
<rect x="239.9" y="329.9" width="2.2" height="2.2"/>
<rect x="60.9" y="333.9" width="2.2" height="2.2"/>
</g>
<g fill="none" stroke="#1a1aff" stroke-width="1.2">
<polyline points="37.2,300 37.2,408.5 320,322"/>
<polyline points="43.3,300 43.3,400.8 320,316"/>
<line x1="0" y1="567.5" x2="320" y2="469"/>
</g>
<g fill="none" stroke="#8c8a25" stroke-width="1.1">
<polyline points="40.2,300 40.2,404.6 320,319"/>
<polyline points="29,300 29,332 62,322"/>
<polyline points="37,352 60,377 310,303"/>
<line x1="0" y1="589" x2="320" y2="491"/>
<polyline points="0,613 21,634 0,641"/>
<polyline points="267,489 300,519"/>
</g>
<line x1="0" y1="580" x2="790" y2="337.9" stroke="#1a1aff" stroke-width="4.2" stroke-dasharray="2.8,2.2"/>
<g clip-path="url(#cl)" stroke="#0c470c" stroke-width="1" fill="none" shape-rendering="crispEdges">
<line x1="826.5" y1="0" x2="826.5" y2="359.8"/>
<line x1="851.5" y1="0" x2="851.5" y2="386.2"/>
<line x1="877.2" y1="0" x2="877.2" y2="413.4"/>
<line x1="902" y1="0" x2="902" y2="439.6"/>
<line x1="927.6" y1="0" x2="927.6" y2="466.7"/>
<line x1="953" y1="0" x2="953" y2="493.6"/>
<line x1="978" y1="0" x2="978" y2="520.0"/>
<line x1="577.2" y1="579.6" x2="1027.2" y2="1055.7"/>
<line x1="577.2" y1="539.3" x2="1027.2" y2="1015.4"/>
<line x1="577.2" y1="499.0" x2="1027.2" y2="975.1"/>
<line x1="577.2" y1="458.7" x2="1027.2" y2="934.8"/>
<line x1="577.2" y1="418.4" x2="1027.2" y2="894.5"/>
<line x1="577.2" y1="378.1" x2="1027.2" y2="854.2"/>
<line x1="577.2" y1="337.8" x2="1027.2" y2="813.9"/>
<line x1="577.2" y1="297.5" x2="1027.2" y2="773.6"/>
<line x1="577.2" y1="257.2" x2="1027.2" y2="733.3"/>
<line x1="577.2" y1="216.9" x2="1027.2" y2="693.0"/>
<line x1="577.2" y1="176.6" x2="1027.2" y2="652.7"/>
<line x1="577.2" y1="136.3" x2="1027.2" y2="612.4"/>
<line x1="577.2" y1="96.0" x2="1027.2" y2="572.1"/>
<line x1="577.2" y1="55.7" x2="1027.2" y2="531.8"/>
<line x1="577.2" y1="15.4" x2="1027.2" y2="491.5"/>
<line x1="577.2" y1="-24.9" x2="1027.2" y2="451.2"/>
<line x1="577.2" y1="-65.2" x2="1027.2" y2="410.9"/>
<line x1="577.2" y1="-105.5" x2="1027.2" y2="370.6"/>
<line x1="577.2" y1="-145.8" x2="1027.2" y2="330.3"/>
<line x1="577.2" y1="-186.1" x2="1027.2" y2="290.0"/>
<line x1="577.2" y1="-226.4" x2="1027.2" y2="249.7"/>
<line x1="577.2" y1="-266.7" x2="1027.2" y2="209.4"/>
<line x1="577.2" y1="-307.0" x2="1027.2" y2="169.1"/>
<line x1="577.2" y1="-347.3" x2="1027.2" y2="128.8"/>
<line x1="577.2" y1="-387.6" x2="1027.2" y2="88.5"/>
</g>
<g clip-path="url(#cl)" fill="#ff1a1a">
<rect x="825.4" y="358.7" width="2.2" height="2.2"/>
<rect x="850.4" y="385.1" width="2.2" height="2.2"/>
<rect x="850.4" y="344.8" width="2.2" height="2.2"/>
<rect x="876.1" y="412.3" width="2.2" height="2.2"/>
<rect x="876.1" y="372.0" width="2.2" height="2.2"/>
<rect x="876.1" y="9.3" width="2.2" height="2.2"/>
<rect x="900.9" y="438.5" width="2.2" height="2.2"/>
<rect x="900.9" y="398.2" width="2.2" height="2.2"/>
<rect x="900.9" y="357.9" width="2.2" height="2.2"/>
<rect x="926.5" y="465.6" width="2.2" height="2.2"/>
<rect x="926.5" y="425.3" width="2.2" height="2.2"/>
<rect x="926.5" y="385.0" width="2.2" height="2.2"/>
<rect x="926.5" y="344.7" width="2.2" height="2.2"/>
<rect x="951.9" y="492.5" width="2.2" height="2.2"/>
<rect x="951.9" y="452.2" width="2.2" height="2.2"/>
<rect x="951.9" y="411.9" width="2.2" height="2.2"/>
<rect x="951.9" y="371.6" width="2.2" height="2.2"/>
<rect x="951.9" y="8.9" width="2.2" height="2.2"/>
<rect x="976.9" y="518.9" width="2.2" height="2.2"/>
<rect x="976.9" y="478.6" width="2.2" height="2.2"/>
<rect x="976.9" y="438.3" width="2.2" height="2.2"/>
<rect x="976.9" y="398.0" width="2.2" height="2.2"/>
<rect x="976.9" y="357.7" width="2.2" height="2.2"/>
<rect x="976.9" y="317.4" width="2.2" height="2.2"/>
<rect x="976.9" y="277.1" width="2.2" height="2.2"/>
<rect x="976.9" y="236.8" width="2.2" height="2.2"/>
<rect x="976.9" y="196.5" width="2.2" height="2.2"/>
<rect x="976.9" y="156.2" width="2.2" height="2.2"/>
<rect x="976.9" y="115.9" width="2.2" height="2.2"/>
<rect x="976.9" y="75.6" width="2.2" height="2.2"/>
<rect x="976.9" y="35.3" width="2.2" height="2.2"/>
</g>
<line x1="810.3" y1="334.1" x2="985" y2="519.9" stroke="#8c8a25" stroke-width="1" />
<line x1="788.3" y1="338.1" x2="985" y2="546.5" stroke="#8c8a25" stroke-width="1" />
<line x1="789" y1="0" x2="789" y2="20" stroke="#1a1aff" stroke-width="1.15"/>
<line x1="801.5" y1="0" x2="801.5" y2="20" stroke="#1a1aff" stroke-width="3.2" stroke-dasharray="2.2,1.8"/>
<line x1="808.5" y1="0" x2="808.5" y2="20" stroke="#8c8a25" stroke-width="1.2"/>
<rect x="584" y="0" width="23" height="12" fill="#c9d4ea"/>
<g stroke="#0c470c" stroke-width="1.15">
<line x1="7" y1="0" x2="7" y2="20"/>
<line x1="62" y1="0" x2="62" y2="20"/>
<line x1="109.5" y1="0" x2="109.5" y2="20"/>
<line x1="202" y1="0" x2="202" y2="20"/>
<line x1="249" y1="0" x2="249" y2="20"/>
<line x1="342" y1="0" x2="342" y2="20"/>
<line x1="389" y1="0" x2="389" y2="20"/>
<line x1="483" y1="0" x2="483" y2="20"/>
<line x1="529.6" y1="0" x2="529.6" y2="20"/>
<line x1="661.6" y1="0" x2="661.6" y2="20"/>
<line x1="708" y1="0" x2="708" y2="20"/>
<line x1="755" y1="0" x2="755" y2="20"/>
<line x1="143.8" y1="3.5" x2="156" y2="0"/><line x1="287.6" y1="3.5" x2="297" y2="0.4"/><line x1="412" y1="8.6" x2="437" y2="0.6"/><line x1="553" y1="8.6" x2="577.8" y2="1.4"/><line x1="577.8" y1="1.4" x2="587" y2="9"/><line x1="678" y1="8.6" x2="708" y2="0.6"/><line x1="708" y1="0.6" x2="760" y2="-14"/>
</g>
<g fill="#ff1a1a"><rect x="155" y="-0.6" width="2.2" height="2.4"/><rect x="296" y="-0.6" width="2.2" height="2.4"/><rect x="435.8" y="-0.4" width="2.2" height="2.4"/><rect x="576.6" y="0.4" width="2.2" height="2.4"/><rect x="706.8" y="-0.4" width="2.2" height="2.4"/></g>
<g stroke="#1a1aff" stroke-width="1.15"><line x1="37.6" y1="0" x2="37.6" y2="6"/><line x1="42.5" y1="0" x2="42.5" y2="6"/><line x1="625.6" y1="0" x2="625.6" y2="12"/><line x1="630.1" y1="0" x2="630.1" y2="12"/></g>
<g stroke="#8c8a25" stroke-width="1.2"><line x1="28.8" y1="0" x2="28.8" y2="6"/><line x1="607.3" y1="0" x2="607.3" y2="12"/><line x1="613.8" y1="0" x2="613.8" y2="12"/></g>
<polygon points="748,659 842,630.5 842,696 787,709 748,709" fill="#878d9e"/>
<polygon points="842,630.5 891,683 891,709 856,709 842,696" fill="#d4def0"/>
<polygon points="787,709 842,696 856,709" fill="#8e8d3c"/>
<polygon points="842,630.5 847,633 892,683 891,683" fill="#f4f7fb"/>
<g stroke="#0c470c" stroke-width="1.15" fill="none"><polyline points="748,709 748,659 842,630.5 891,683 891,709"/><line x1="794.6" y1="645" x2="794.6" y2="709"/><line x1="842" y1="630.5" x2="842" y2="696"/><line x1="866.8" y1="657" x2="866.8" y2="709"/></g>
<g stroke="#8c8a25" stroke-width="1.6" fill="none"><polyline points="752,709 752,662 838,636 838,694 787,707"/><polyline points="845,640 845,694 858,707"/><polyline points="847,640 888,685 888,709"/><polyline points="787,709 842,696 856,709" stroke-width="3"/></g>
<g fill="#ff1a1a"><rect x="746.8" y="657.8" width="2.2" height="2.4"/><rect x="793.4" y="643.8" width="2.2" height="2.4"/><rect x="840.8" y="629.3" width="2.2" height="2.4"/><rect x="865.6" y="655.8" width="2.2" height="2.4"/><rect x="889.8" y="681.8" width="2.2" height="2.4"/><rect x="840.8" y="694.8" width="2.2" height="2.4"/></g>
<g opacity="0.88"><polygon points="392,667 441,667 455.5,709 447.7,709" fill="#787a60"/><polygon points="441,667 474,667 463.3,709 455.5,709" fill="#83856a"/><polygon points="474,667 501.5,667 468.6,709 463.3,709" fill="#8e926f"/><polygon points="501.5,667 512,667 531,688.3 479,709 468.6,709" fill="#959a74"/></g>
<polygon points="517.2,667 530.4,667 530.4,681.6" fill="#eef2fa" stroke="#8b8600" stroke-width="1.2"/>
<g stroke="#8b8600" stroke-width="3.6" fill="none" stroke-linecap="butt"><line x1="392.2" y1="667" x2="447.7" y2="709"/><line x1="404" y1="678" x2="437" y2="709" stroke-width="2.6"/><line x1="440.8" y1="667" x2="455.5" y2="709"/><line x1="473.8" y1="667" x2="463.3" y2="709"/><line x1="501.5" y1="667" x2="468.6" y2="709"/><line x1="531" y1="688.3" x2="479" y2="709"/><line x1="512" y1="667" x2="531" y2="688.3" stroke-width="1.6"/><line x1="460.5" y1="676" x2="460.5" y2="709" stroke-width="2.4" stroke="#8f8d2a"/></g>
<line x1="532.4" y1="666" x2="532.4" y2="688" stroke="#0c470c" stroke-width="1.15"/>
<g stroke="#8c8a25" stroke-width="1" fill="none"><polyline points="409,667 440,702"/><polyline points="500,667 512,685 440,709"/></g>
<g stroke="#8c8a25" stroke-width="1.1" fill="none"><polyline points="979,582 916,600 958,645"/><polyline points="979,598 955,606 979,632"/><polyline points="557,709 613,691.4 628,707"/><polyline points="690,367 760,350"/><polyline points="700,384 728,412 812,388 790,364"/><polyline points="812,388 850,376 836,362"/></g>
<g stroke="#1d4f96" stroke-width="1" fill="none"><polyline points="752,374 789,358 811,380 774,394 752,374"/><line x1="752" y1="374" x2="752" y2="400"/><line x1="758" y1="380" x2="758" y2="392"/><line x1="766" y1="388" x2="766" y2="412"/><line x1="779" y1="360" x2="779" y2="416"/><line x1="795" y1="364" x2="795" y2="386"/><line x1="803" y1="372" x2="803" y2="398"/><line x1="806" y1="377" x2="806" y2="400"/></g>
<defs><g id="sp"><polygon points="-8,-4 2,-12 14,4 -2,8" fill="#4a73b4" stroke="#123f86" stroke-width="1"/><polygon points="-8,-4 2,-12 -2,8" fill="#7fb0f2"/><circle cx="-10" cy="-3" r="3" fill="#123f86"/><circle cx="2" cy="-13" r="3" fill="#123f86"/><circle cx="6" cy="-8" r="2.6" fill="#123f86"/><circle cx="15" cy="4" r="3" fill="#123f86"/><circle cx="-2" cy="9" r="3" fill="#123f86"/><circle cx="-10" cy="-3.4" r="1" fill="#6fa0e0"/><circle cx="15" cy="3.6" r="1" fill="#6fa0e0"/><circle cx="-2" cy="8.6" r="1" fill="#6fa0e0"/></g></defs>
<use href="#sp" x="706" y="374"/>
<use href="#sp" x="752" y="360"/>
<use href="#sp" x="733" y="399"/>
<use href="#sp" x="779" y="384"/>
<use href="#sp" x="757" y="427"/>
<use href="#sp" x="804" y="410"/>
<use href="#sp" x="824.5" y="369"/>
<use href="#sp" x="852" y="395"/>
<use href="#sp" x="286.6" y="499"/>
<use href="#sp" x="305.8" y="528.7"/>
<use href="#sp" x="11.4" y="655.6"/>
<use href="#sp" x="934" y="609.6"/>
<use href="#sp" x="960" y="636.7"/>
<use href="#sp" x="980" y="598"/>
<use href="#sp" x="982" y="664"/>
<use href="#sp" x="607" y="712"/>
<circle cx="798" cy="352" r="3" fill="#123f86"/><circle cx="838" cy="396" r="3" fill="#123f86"/>
<!--BGEND-->
</svg>

<!-- DIALOG 1 : FE Thickness -->
<div class="dlg" id="d1" style="left:5px;top:4px;width:301px;height:317px;">
  <div class="tbar" style="height:37px;border-bottom:1px solid #a0a0a0;box-shadow:0 1px 0 #fff;"></div>
</div>
<div id="c1">
  <!-- title icon -->
  <svg width="0" height="0"><defs><g id="ticon"><rect width="20" height="20" fill="#c3c3c3"/><polygon points="0,4.6 12.6,4.6 12.6,10.7 6,17.4 0,17.4" fill="#ff0000"/><path d="M0,4.6 H13" stroke="#000" stroke-width="1"/><rect x="11.8" y="4.2" width="1.8" height="6.6" fill="#000"/><path d="M11.8,6 L5.8,11 M0,11 H5.8 M5.6,11 V17 M12.4,10.6 L6,17.2" stroke="#000" stroke-width="1.1" fill="none"/><path d="M0,17.6 H6" stroke="#000" stroke-width="1.8"/><path d="M16.4,.8 V16.8 M13.8,4.7 H18.8 M13.8,10.5 H18.8" stroke="#1010ff" stroke-width="1.3" fill="none"/></g></defs></svg>
  <svg style="left:14px;top:12px" width="20" height="20" viewBox="0 0 20 20"><use href="#ticon"/></svg>
  <div class="ttl" style="left:39px;top:13px;line-height:20px;transform-origin:0 50%;transform:scaleX(.894);">FE Thickness</div>
  <!-- window controls -->
  <svg style="left:150px;top:10px" width="140" height="24" viewBox="0 0 140 24"><path d="M3.5,12 H15" stroke="#8c8c8c" stroke-width="1.2"/><rect x="61.5" y="6.5" width="11" height="11" fill="none" stroke="#dcdcdc" stroke-width="1.2"/><path d="M120,6.5 L131.5,18 M131.5,6.5 L120,18" stroke="#8c8c8c" stroke-width="1.3"/></svg>
  <!-- toolbar icons -->
  <svg style="left:17px;top:46px" width="16" height="18" viewBox="0 0 16 18"><path d="M1.5,1.5 H10.5 L14.5,5.5 V16.5 H1.5 Z" fill="#fff" stroke="#111" stroke-width="1.6"/><path d="M10.5,1.5 V5.5 H14.5" fill="none" stroke="#111" stroke-width="1.2"/></svg>
  <svg style="left:43px;top:46px" width="21" height="20" viewBox="0 0 21 20"><path d="M2,2 L16,16 M16,2 L2,16" stroke="#a9a9a9" stroke-width="3.6"/><path d="M19.5,1 V19 H1" stroke="#b9b9b9" stroke-width="1" fill="none"/></svg>
  <div class="abs" style="left:129px;top:43px;width:27px;height:24px;background:#cce4f7;box-shadow:inset 0 0 0 1px #9dccf0;"></div>
  <svg style="left:79px;top:47px" width="20" height="18" viewBox="0 0 20 18"><rect x=".8" y=".8" width="18.4" height="16.4" rx="2" fill="#eaf3fd" stroke="#3c86dc" stroke-width="1.6"/><rect x="1" y="1" width="18" height="3.6" fill="#3c86dc"/><rect x="4" y="7" width="4" height="3.4" fill="#f08050"/><rect x="11" y="10" width="4.4" height="3.6" fill="#1f3fa0"/><rect x="4" y="12" width="4" height="1" fill="#b7c3d3"/><rect x="11" y="15" width="4.4" height="1" fill="#b7c3d3"/></svg>
  <svg style="left:106px;top:47px" width="20" height="18" viewBox="0 0 20 18"><rect x=".8" y=".8" width="18.4" height="16.4" rx="2" fill="#eaf3fd" stroke="#3c86dc" stroke-width="1.6"/><rect x="1" y="1" width="18" height="3.6" fill="#3c86dc"/><rect x="3.6" y="6" width="2.6" height="2.6" fill="#2a6fd0"/><rect x="3.6" y="12" width="2.6" height="2.6" fill="#f08050"/><rect x="11" y="9" width="3" height="3" fill="#18a018"/><rect x="7.5" y="7" width="2.4" height="1" fill="#b7c3d3"/><rect x="7.5" y="13" width="2.4" height="1" fill="#b7c3d3"/><rect x="15" y="10" width="2.4" height="1" fill="#b7c3d3"/></svg>
  <svg style="left:133px;top:47px" width="20" height="18" viewBox="0 0 20 18"><rect x=".8" y=".8" width="18.4" height="16.4" rx="2" fill="#eaf3fd" stroke="#3c86dc" stroke-width="1.6"/><rect x="1" y="1" width="18" height="3.6" fill="#3c86dc"/><rect x="4" y="6.4" width="2.6" height="2.8" fill="#9d93c8"/><rect x="8.8" y="6.4" width="2.6" height="2.8" fill="#2a6fd0"/><rect x="13.6" y="6.4" width="2.6" height="2.8" fill="#18a018"/><rect x="4" y="11.6" width="2.6" height="2.8" fill="#f08050"/><rect x="8.8" y="11.6" width="2.6" height="2.8" fill="#1f3fa0"/><rect x="13.6" y="11.6" width="2.6" height="2.8" fill="#d8a020"/></svg>
  <svg style="left:160px;top:47px" width="20" height="18" viewBox="0 0 20 18"><rect x=".8" y=".8" width="18.4" height="16.4" rx="2" fill="#eaf3fd" stroke="#3c86dc" stroke-width="1.6"/><rect x="1" y="1" width="18" height="3.6" fill="#3c86dc"/><rect x="3" y="9" width="14" height="1.4" fill="#3c86dc"/><g fill="#aab9cc"><rect x="3.5" y="6.3" width="3" height="1.2"/><rect x="8.5" y="6.3" width="3" height="1.2"/><rect x="13.5" y="6.3" width="3" height="1.2"/><rect x="3.5" y="11.6" width="3" height="1.2"/><rect x="8.5" y="11.6" width="3" height="1.2"/><rect x="13.5" y="11.6" width="3" height="1.2"/><rect x="3.5" y="14.2" width="3" height="1.2"/><rect x="8.5" y="14.2" width="3" height="1.2"/><rect x="13.5" y="14.2" width="3" height="1.2"/></g></svg>
  <svg style="left:197px;top:46px" width="15" height="20" viewBox="0 0 15 20"><path d="M3.8,1.2 L9.6,11.4 M11.4,1.2 L5.6,11.4" stroke="#222" stroke-width="1.6" fill="none"/><ellipse cx="4.4" cy="14.2" rx="2" ry="2.9" fill="none" stroke="#2424b0" stroke-width="1.5"/><ellipse cx="10.6" cy="14.2" rx="2" ry="2.9" fill="none" stroke="#2424b0" stroke-width="1.5"/></svg>
  <svg style="left:229px;top:46px" width="22" height="20" viewBox="0 0 22 20"><path d="M1.5,5 H6.5 L8.5,7 H15 V18 H1.5 Z" fill="#e6c25a"/><path d="M1.5,18 L4.5,9.5 H18 L15,18 Z" fill="#f8e08c"/><circle cx="16.4" cy="6.6" r="3" fill="#ff8a3c"/><circle cx="16.4" cy="6.6" r="1.3" fill="#ffe9a0"/><path d="M16.4,2.4 V10.8 M12.2,6.6 H20.6 M13.4,3.6 L19.4,9.6 M19.4,3.6 L13.4,9.6" stroke="#ff8a3c" stroke-width="1"/></svg>
  <!-- list box -->
  <div class="abs" style="left:17px;top:85px;width:277px;height:122px;box-sizing:border-box;border:1px solid #828790;background:#fff;"></div>
  <div class="abs" style="left:18px;top:185px;width:275px;height:20px;background:#f0f0f0;"></div>
  <div class="abs" style="left:40px;top:185px;width:116px;height:20px;background:#cdcdcd;"></div>
  <svg style="left:24px;top:189px" width="12" height="12" viewBox="0 0 12 12"><path d="M7.5,2 L3.5,6 L7.5,10" fill="none" stroke="#555" stroke-width="1.5"/></svg>
  <svg style="left:275px;top:189px" width="12" height="12" viewBox="0 0 12 12"><path d="M4.5,2 L8.5,6 L4.5,10" fill="none" stroke="#555" stroke-width="1.5"/></svg>
  <svg style="left:39px;top:89px" width="19" height="17" viewBox="0 0 19 17"><path d="M2,1.5 L14,14 M15,1 L2,15" stroke="#e01010" stroke-width="2.2" fill="none"/><rect x="14" y="14.5" width="1.6" height="1.6" fill="#e01010"/></svg>
  <div class="t" style="left:60px;top:90px;font-size:12px;letter-spacing:-0.6px;">DELETE</div>
  <div class="t" style="left:60px;top:111px;font-size:12px;">TH14</div>
  <div class="t" style="left:60px;top:132px;font-size:12px;">TH25</div>
  <div class="t" style="left:60px;top:153px;font-size:12px;">TH25_Elastic_UZ</div>
  <div class="t" style="left:206px;top:90px;width:87px;overflow:hidden;font-size:12px;">TH30_CONCR</div>
  <svg style="left:20px;top:154px" width="14" height="12" viewBox="0 0 14 12"><path d="M0,6 H8" stroke="#000" stroke-width="2.4"/><path d="M7,1.2 L13.6,6 L7,10.8 Z" fill="#000"/></svg>
  <svg width="0" height="0"><defs><g id="slab"><polygon points="6,1 18,1 13,7.4 1,7.4" fill="#8a8a00" stroke="#000" stroke-width="1.2" stroke-linejoin="round"/><polygon points="1,7.4 13,7.4 13,10.6 1,10.6" fill="#ffff00" stroke="#000" stroke-width="1.2" stroke-linejoin="round"/><polygon points="13,7.4 18,1 18,4 13,10.6" fill="#ffff00" stroke="#000" stroke-width="1.2" stroke-linejoin="round"/></g></defs></svg>
  <svg style="left:39px;top:111px" width="19" height="12"><use href="#slab"/></svg>
  <svg style="left:39px;top:132px" width="19" height="12"><use href="#slab"/></svg>
  <svg style="left:39px;top:153px" width="19" height="12"><use href="#slab"/></svg>
  <svg style="left:185px;top:90px" width="19" height="12"><use href="#slab"/></svg>
  <!-- Panels group -->
  <div class="grp" style="left:17px;top:223px;width:277px;height:61px;"></div>
  <div class="glab" style="left:24px;top:216px;">Panels</div>
  <div class="abs" style="left:30px;top:235px;width:254px;height:44px;box-sizing:border-box;border:1px solid #7a7a7a;background:#fff;"></div>
  <div class="abs" style="left:262px;top:237px;width:20px;height:40px;background:#f0f0f0;"></div>
  <svg style="left:266px;top:242px" width="12" height="30" viewBox="0 0 12 30"><path d="M2.5,7.5 L6,4 L9.5,7.5" fill="none" stroke="#b0b0b0" stroke-width="1.5"/><path d="M2.5,22.5 L6,26 L9.5,22.5" fill="none" stroke="#b0b0b0" stroke-width="1.5"/></svg>
  <!-- buttons -->
  <div class="btn" style="left:22px;top:288px;width:86px;height:26px;line-height:25px;background:#cccccc;border-color:#bfbfbf;color:#838383;">Apply</div>
  <div class="btn" style="left:115px;top:288px;width:86px;height:26px;line-height:25px;">Close</div>
  <div class="btn" style="left:207px;top:288px;width:86px;height:26px;line-height:25px;">Help</div>
</div>

<!-- DIALOG 2 : New Thickness -->
<div class="dlg" id="d2" style="left:310px;top:8px;width:373px;height:658px;">
  <div class="tbar" style="height:37px;"></div>
</div>
<div id="c2">
  <svg style="left:319px;top:16px" width="20" height="20" viewBox="0 0 20 20"><use href="#ticon"/></svg>
  <div class="ttl" style="left:344px;top:17px;line-height:20px;transform-origin:0 50%;transform:scaleX(.947);">New Thickness</div>
  <svg style="left:526px;top:14px" width="140" height="24" viewBox="0 0 140 24"><path d="M4,11.5 H16.5" stroke="#8c8c8c" stroke-width="1.2"/><rect x="62.5" y="7.5" width="11" height="10.5" fill="none" stroke="#dcdcdc" stroke-width="1.2"/><path d="M120.5,6.5 L133.5,18 M133.5,6.5 L120.5,18" stroke="#8c8c8c" stroke-width="1.3"/></svg>
  <!-- tab control -->
  <div class="abs" style="left:322px;top:82px;width:346px;height:477px;box-sizing:border-box;border:1px solid #d9d9d9;background:#fff;"></div>
  <div class="abs" style="left:419px;top:61px;width:72px;height:22px;box-sizing:border-box;border:1px solid #d9d9d9;border-bottom:none;background:#f0f0f0;"></div>
  <div class="abs" style="left:322px;top:59px;width:97px;height:24px;box-sizing:border-box;border:1px solid #d9d9d9;border-bottom:none;background:#fff;"></div>
  <div class="t" style="left:330px;top:63px;font-size:12.5px;">Homogeneous</div>
  <div class="t" style="left:423px;top:65px;">Orthotropic</div>
  <!-- picture -->
  <div class="abs" style="left:341px;top:115px;width:308px;height:108px;background:#eeeeee;"></div>
  <svg style="left:341px;top:115px" width="308" height="108" viewBox="341 115 308 108">
    <polygon points="447,155.5 613,155.5 588.5,180.5 423.5,180.5" fill="#808000" stroke="#000" stroke-width="1.5" stroke-linejoin="miter"/>
    <polygon points="423.5,180.5 588.5,180.5 588.5,190 423.5,190" fill="#ffff00" stroke="#000" stroke-width="1.5"/>
    <polygon points="588.5,180.5 613,155.5 613,165.5 588.5,190" fill="#ffff00" stroke="#000" stroke-width="1.5"/>
    <rect x="413" y="161" width="10" height="13" fill="#fff"/>
    <path d="M416.5,180 V191.5 M414,183.5 L416.5,180.3 L419,183.5 M414,188 L416.5,191.2 L419,188 M413.5,180.3 H421 M413.5,191.5 H421" stroke="#000" stroke-width="1" fill="none"/>
  </svg>
  <div class="t" style="left:414px;top:160px;font-weight:bold;color:#ff0000;font-size:12px;">h</div>
  <!-- label row -->
  <div class="t" style="left:345px;top:260px;">Label:</div>
  <div class="inp" style="left:404px;top:253px;width:79px;height:24px;line-height:21px;padding-left:6px;">TH25_Elastic_UZ</div>
  <div class="t" style="left:508px;top:256px;">Color:</div>
  <div class="cmb" style="left:567px;top:251px;width:79px;height:26px;line-height:22px;font-size:12px;padding-left:2px;">Auto</div>
  <svg style="left:629px;top:259px" width="12" height="10" viewBox="0 0 12 10"><path d="M1,2.5 L6,7.5 L11,2.5" fill="none" stroke="#4a4a4a" stroke-width="1.1"/></svg>
  <!-- radios -->
  <div class="radio on" style="left:355px;top:292px;"></div>
  <div class="t" style="left:374px;top:292px;">Constant</div>
  <div class="t" style="left:492px;top:292px;">Th =</div>
  <div class="inp" style="left:534px;top:285px;width:60px;height:24px;line-height:21px;padding-left:6px;">25.00</div>
  <div class="t" style="left:595px;top:288px;">(mm)</div>
  <div class="radio" style="left:355px;top:316px;"></div>
  <div class="t" style="left:374px;top:316px;">Variable along a line</div>
  <div class="radio" style="left:355px;top:340px;"></div>
  <div class="t" style="left:374px;top:340px;">Variable on a plane</div>
  <div class="t" style="left:418px;top:356px;width:120px;text-align:center;">Point coordinates</div>
  <div class="t" style="left:421px;top:372px;width:120px;text-align:center;">(mm)</div>
  <div class="t" style="left:539px;top:356px;width:120px;text-align:center;">Thicknesses</div>
  <div class="t" style="left:539px;top:372px;width:120px;text-align:center;">(mm)</div>
  <div class="t" style="left:355px;top:400px;">P1 :</div>
  <div class="inp dis" style="left:397px;top:393px;width:158px;height:24px;line-height:21px;padding-left:6px;">0.00; 0.00; 0.00</div>
  <div class="inp dis" style="left:565px;top:393px;width:68px;height:24px;line-height:21px;padding-left:6px;">0.00</div>
  <div class="t" style="left:355px;top:424px;">P2 :</div>
  <div class="inp dis" style="left:397px;top:419px;width:158px;height:24px;line-height:21px;padding-left:6px;">0.00; 0.00; 0.00</div>
  <div class="inp dis" style="left:565px;top:419px;width:68px;height:24px;line-height:21px;padding-left:6px;">0.00</div>
  <div class="t" style="left:355px;top:449px;">P3 :</div>
  <div class="inp dis" style="left:397px;top:445px;width:158px;height:24px;line-height:21px;padding-left:6px;">0.00; 0.00; 0.00</div>
  <div class="inp dis" style="left:565px;top:445px;width:68px;height:24px;line-height:21px;padding-left:6px;">0.00</div>
  <!-- reductions -->
  <div class="chk" style="left:357px;top:479px;width:16px;height:16px;"></div>
  <div class="t" style="left:376px;top:472px;">Reduction of the</div>
  <div class="t" style="left:376px;top:488px;">moment of inertia</div>
  <div class="inp dis" style="left:522px;top:473px;width:46px;height:24px;line-height:21px;padding-left:6px;">1.000</div>
  <div class="t" style="left:572px;top:478px;color:#9a9a9a;">*Ig</div>
  <div class="btn" style="left:610px;top:498px;width:24px;height:26px;line-height:24px;">&gt;&gt;</div>
  <div class="chk" style="left:357px;top:515px;width:16px;height:16px;"></div>
  <div class="t" style="left:376px;top:508px;">Reduction of the cross</div>
  <div class="t" style="left:376px;top:524px;">section area</div>
  <div class="inp" style="left:522px;top:509px;width:46px;height:24px;"></div>
  <div class="t" style="left:575px;top:513px;">*A</div>
  <!-- foundation -->
  <div class="chk" style="left:328px;top:571px;width:16px;height:16px;"></div>
  <svg style="left:328px;top:571px" width="16" height="16" viewBox="0 0 16 16"><path d="M3.5,8 L6.8,11.2 L12.6,4.6" fill="none" stroke="#222" stroke-width="1.4"/></svg>
  <div class="btn" style="left:348px;top:566px;width:322px;height:26px;line-height:25px;">Parameters of foundation elasticity</div>
  <div class="t" style="left:333px;top:602px;">Material:</div>
  <div class="cmb" style="left:524px;top:597px;width:137px;height:24px;line-height:23px;background:#e1e1e1;border-color:#adadad;">STEEL</div>
  <svg style="left:644px;top:604px" width="12" height="10" viewBox="0 0 12 10"><path d="M1,2.5 L6,7.5 L11,2.5" fill="none" stroke="#4a4a4a" stroke-width="1.1"/></svg>
  <div class="btn" style="left:395px;top:630px;width:86px;height:26px;line-height:25px;">Add</div>
  <div class="btn" style="left:488px;top:630px;width:86px;height:26px;line-height:25px;">Close</div>
  <div class="btn" style="left:584px;top:630px;width:86px;height:26px;line-height:25px;">Help</div>
</div>

<!-- DIALOG 3 : Definition -->
<div class="dlg" id="d3" style="left:686px;top:16px;width:284px;height:332px;box-shadow:0 0 0 1px #565b66,0 3px 12px 2px rgba(0,0,0,.38);">
  <div class="tbar" style="height:37px;"></div>
</div>
<div id="c3">
  <svg style="left:695px;top:24px" width="20" height="20" viewBox="0 0 20 20"><rect width="20" height="20" fill="#fde6c2"/><rect y="11" width="20" height="9" fill="#fddcaa"/><path d="M6.4,14.4 V3.4 H9.8 Q13,3.4 13,6.3 Q13,9.2 9.8,9.2 H7 M9.6,9.2 L13.2,14.8" fill="none" stroke="#e6a42c" stroke-width="2.4"/><path d="M10.6,15.9 H17.2" stroke="#f2a51e" stroke-width="1.5"/></svg>
  <div class="ttl" style="left:720px;top:25px;line-height:20px;color:#000;transform-origin:0 50%;transform:scaleX(1.03);">Definitio...</div>
  <svg style="left:810px;top:22px" width="150" height="24" viewBox="0 0 150 24"><path d="M6.5,10.7 H20" stroke="#111" stroke-width="1.2"/><rect x="65.5" y="6.5" width="11" height="11" fill="none" stroke="#d2d2d2" stroke-width="1.2"/><path d="M124.2,6.2 L136,17.8 M136,6.2 L124.2,17.8" stroke="#111" stroke-width="1.3"/></svg>
  <div class="grp" style="left:690px;top:62px;width:277px;height:113px;"></div>
  <div class="glab" style="left:697px;top:54px;">Foundation elasticity</div>
  <div class="btn" style="left:696px;top:78px;width:264px;height:26px;line-height:25px;">Elastic foundation coefficient</div>
  <div class="t" style="left:712px;top:118px;">Kz =</div>
  <div class="inp" id="kz" style="left:768px;top:111px;width:79px;height:24px;line-height:21px;padding-left:5px;font-size:12.6px;background:#00ee00;border:1px solid #0078d7;border-top-color:#1a5a1a;border-left-color:#1a5a1a;">1.00e+10<span style="display:inline-block;width:1px;height:15px;background:#b030b0;vertical-align:-2px;margin-left:1px;"></span></div>
  <div class="t" style="left:852px;top:116px;">(N/mm3)</div>
  <div class="t" style="left:712px;top:150px;">Uplift:</div>
  <div class="cmb" style="left:835px;top:145px;width:79px;height:24px;line-height:22px;background:#e1e1e1;border-color:#adadad;">None</div>
  <svg style="left:897px;top:152px" width="12" height="10" viewBox="0 0 12 10"><path d="M1,2.5 L6,7.5 L11,2.5" fill="none" stroke="#4a4a4a" stroke-width="1.1"/></svg>
  <div class="grp" style="left:690px;top:192px;width:277px;height:114px;"></div>
  <div class="glab" style="left:697px;top:184px;">Tangent elasticity</div>
  <div class="btn" style="left:696px;top:208px;width:264px;height:26px;line-height:25px;">Automatic direction</div>
  <div class="t" style="left:712px;top:248px;">Kx =</div>
  <div class="inp" style="left:768px;top:241px;width:79px;height:24px;line-height:21px;padding-left:6px;">0.00e+00</div>
  <div class="t" style="left:852px;top:246px;">(N/mm3)</div>
  <div class="t" style="left:712px;top:278px;">Ky =</div>
  <div class="inp" style="left:768px;top:271px;width:79px;height:24px;line-height:21px;padding-left:6px;">0.00e+00</div>
  <div class="t" style="left:852px;top:276px;">(N/mm3)</div>
  <div class="btn" style="left:691px;top:316px;width:86px;height:26px;line-height:23px;border:2px solid #0078d7;">Add</div>
  <div class="btn" style="left:785px;top:316px;width:86px;height:26px;line-height:25px;">Close</div>
  <div class="btn" style="left:880px;top:316px;width:86px;height:26px;line-height:25px;">Help</div>
</div>

<!-- HIGHLIGHTER MARKS -->
<svg id="hl" style="left:0;top:0;mix-blend-mode:multiply;" width="979" height="709" viewBox="0 0 979 709">
  <g fill="#ffff00">
  <!-- loop around Parameters of foundation elasticity -->
  <path fill-rule="evenodd" d="M300.3,555 L309.7,550.8 L320.5,544.1 L338.9,541 L362.2,541.3 L400,542.4 L462,543.2 L514.4,547.3 L560,550.5 L623.5,550.5 L667.7,549.7 L706,548.9 L706,569.6 L683.5,570 L683.5,592.2 L631.7,595.5 L589.2,600.4 L550,597.9 L498,600.4 L449,602.8 L400,600.4 L369.5,596.8 L345,593.7 L326.6,590 L309.7,584.5 L300.3,578.4 Z M326.6,566.2 L348.7,562.1 L381.8,563.1 L416,563.7 L454,564.4 L514.4,567.7 L560,569.3 L615.4,570.1 L674.2,570.8 L674.2,571.6 L648,572.6 L615.4,573.9 L582.7,575.9 L550,577.5 L481.7,575.9 L400,577.6 L369.5,574.7 L348.7,571.1 L326.6,566.5 Z"/>
  <!-- Add button in New Thickness -->
  <path d="M397,639 L440,637 L481,634 L481.3,654 L442,656.5 L397,658.6 Z"/>
  <!-- ring around Kz -->
  <path fill-rule="evenodd" d="M753.8,129.1 L755.6,118.1 L760.2,108.9 L771.3,102.5 L786.0,97.9 L813.5,94.2 L850.3,94.2 L868.7,97.5 L883.4,101.5 L901.8,107.1 L905.5,114.4 L906.6,121.8 L906.2,132.8 L904.6,142.0 L894.4,153.0 L868.7,158.5 L835.6,162.2 L813.5,165.0 L798.8,163.7 L786.0,160.4 L762.1,153.0 L754.7,146.6 Z M767.6,133.2 L770.3,135.4 L795.2,137.8 L819.1,139.8 L850.3,138.3 L877.9,135.0 L900.0,131.3 L903.6,128.2 L903.6,115.3 L898.5,109.3 L868.7,108.5 L852.2,110.0 L846.6,111.8 L820.9,111.8 L820.9,112.9 L769.4,112.9 L769.4,133.2 Z"/>
  <!-- Add button in Definition -->
  <path d="M700,317.6 L724,318.4 L750,316.6 L776.4,316.4 L776.6,339.8 L741,341 L700,338 Z"/>
  </g>
</svg>
</body>
</html>
